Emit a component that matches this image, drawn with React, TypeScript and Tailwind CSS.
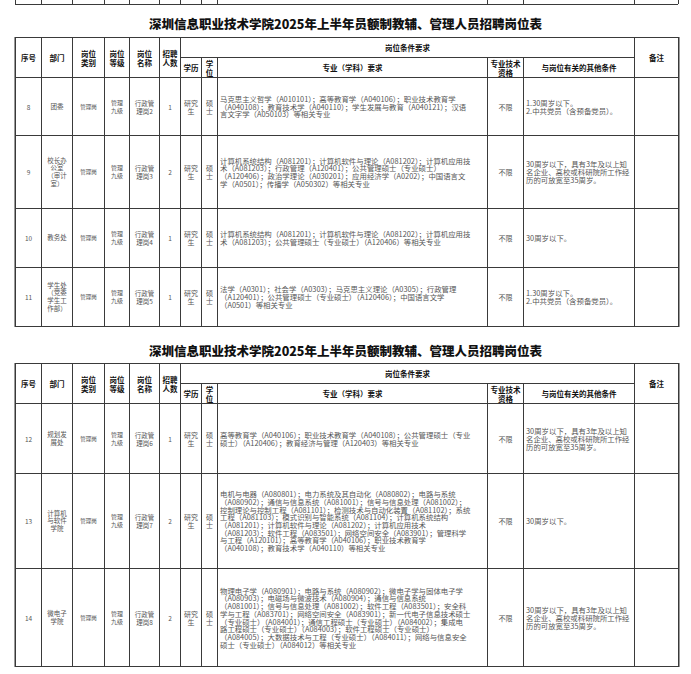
import React from 'react';

const cols = [26, 31, 32, 25, 30, 21, 21, 16, 270, 36, 111, 44];

interface Row {
  no: string;
  dept: string[];
  name: string[];
  count: string;
  major: string[];
  other: string[];
  h: string;
}

const OLD = ['1.30周岁以下。', '2.中共党员（含预备党员）。'];
const EXP = ['30周岁以下，具有3年及以上知', '名企业、高校或科研院所工作经', '历的可放宽至35周岁。'];
const YOUNG = ['30周岁以下。'];

const first: Row[] = [
  {
    no: '8',
    dept: ['团委'],
    name: ['行政管', '理岗2'],
    count: '1',
    major: [
      '马克思主义哲学（A010101）；高等教育学（A040106）；职业技术教育学',
      '（A040108）；教育技术学（A040110）；学生发展与教育（A040121）；汉语',
      '言文字学（A050103）等相关专业',
    ],
    other: OLD,
    h: 'h-[58px]',
  },
  {
    no: '9',
    dept: ['校长办', '公室', '（审计', '室）'],
    name: ['行政管', '理岗3'],
    count: '2',
    major: [
      '计算机系统结构（A081201）；计算机软件与理论（A081202）；计算机应用技',
      '术（A081203）；行政管理（A120401）；公共管理硕士（专业硕士）',
      '（A120406）；政治学理论（A030201）；应用经济学（A0202）；中国语言文',
      '学（A0501）；传播学（A050302）等相关专业',
    ],
    other: EXP,
    h: 'h-[73px]',
  },
  {
    no: '10',
    dept: ['教务处'],
    name: ['行政管', '理岗4'],
    count: '1',
    major: [
      '计算机系统结构（A081201）；计算机软件与理论（A081202）；计算机应用技',
      '术（A081203）；公共管理硕士（专业硕士）（A120406）等相关专业',
    ],
    other: YOUNG,
    h: 'h-[59px]',
  },
  {
    no: '11',
    dept: ['学生处', '（党委', '学生工', '作部）'],
    name: ['行政管', '理岗5'],
    count: '1',
    major: [
      '法学（A0301）；社会学（A0303）；马克思主义理论（A0305）；行政管理',
      '（A120401）；公共管理硕士（专业硕士）（A120406）；中国语言文学',
      '（A0501）等相关专业',
    ],
    other: OLD,
    h: 'h-[59px]',
  },
];

const second: Row[] = [
  {
    no: '12',
    dept: ['规划发', '展处'],
    name: ['行政管', '理岗6'],
    count: '1',
    major: [
      '高等教育学（A040106）；职业技术教育学（A040108）；公共管理硕士（专业',
      '硕士）（A120406）；教育经济与管理（A120403）等相关专业',
    ],
    other: EXP,
    h: 'h-[70px]',
  },
  {
    no: '13',
    dept: ['计算机', '与软件', '学院'],
    name: ['行政管', '理岗7'],
    count: '2',
    major: [
      '电机与电器（A080801）；电力系统及其自动化（A080802）；电路与系统',
      '（A080902）；通信与信息系统（A081001）；信号与信息处理（A081002）；',
      '控制理论与控制工程（A081101）；检测技术与自动化装置（A081102）；系统',
      '工程（A081103）；模式识别与智能系统（A081104）；计算机系统结构',
      '（A081201）；计算机软件与理论（A081202）；计算机应用技术',
      '（A081203）；软件工程（A083501）；网络空间安全（A083901）；管理科学',
      '与工程（A120101）；高等教育学（A040106）；职业技术教育学',
      '（A040108）；教育技术学（A040110）等相关专业',
    ],
    other: YOUNG,
    h: 'h-[95px]',
  },
  {
    no: '14',
    dept: ['微电子', '学院'],
    name: ['行政管', '理岗8'],
    count: '2',
    major: [
      '物理电子学（A080901）；电路与系统（A080902）；微电子学与固体电子学',
      '（A080903）；电磁场与微波技术（A080904）；通信与信息系统',
      '（A081001）；信号与信息处理（A081002）；软件工程（A083501）；安全科',
      '学与工程（A083701）；网络空间安全（A083901）；新一代电子信息技术硕士',
      '（专业硕士）（A084001）；通信工程硕士（专业硕士）（A084002）；集成电',
      '路工程硕士（专业硕士）（A084003）；软件工程硕士（专业硕士）',
      '（A084005）；大数据技术与工程（专业硕士）（A084011）；网络与信息安全',
      '硕士（专业硕士）（A084012）等相关专业',
    ],
    other: EXP,
    h: 'h-[98px]',
  },
];

const th = 'border border-[#3a3a3a] p-0 text-center align-middle font-bold text-[7.5px] leading-[9px] text-[#111]';
const td = 'border border-[#3a3a3a] p-0 text-center align-middle text-[#555]';

function Lines({ items }: { items: string[] }) {
  return (
    <>
      {items.map((s, i) => (
        <div key={i}>{s}</div>
      ))}
    </>
  );
}

function Sheet({ rows }: { rows: Row[] }) {
  return (
    <table className="ml-[15px] w-[663px] table-fixed border-collapse bg-white shadow-[-1px_0_0_#9a9a9a,1px_0_0_#9a9a9a]">
      <colgroup>
        {cols.map((w, i) => (
          <col key={i} style={{ width: w }} />
        ))}
      </colgroup>
      <thead>
        <tr className="h-[20px]">
          <th rowSpan={2} className={th}>序号</th>
          <th rowSpan={2} className={th}>部门</th>
          <th rowSpan={2} className={th}><Lines items={['岗位', '类别']} /></th>
          <th rowSpan={2} className={th}><Lines items={['岗位', '等级']} /></th>
          <th rowSpan={2} className={th}><Lines items={['岗位', '名称']} /></th>
          <th rowSpan={2} className={th}><Lines items={['招聘', '人数']} /></th>
          <th colSpan={5} className={th}>岗位条件要求</th>
          <th rowSpan={2} className={th}>备注</th>
        </tr>
        <tr className="h-[20px]">
          <th className={th}>学历</th>
          <th className={th}><Lines items={['学', '位']} /></th>
          <th className={th}>专业（学科）要求</th>
          <th className={th}><Lines items={['专业技术', '资格']} /></th>
          <th className={th}>与岗位有关的其他条件</th>
        </tr>
      </thead>
      <tbody>
        {rows.map((r) => (
          <tr key={r.no} className={r.h}>
            <td className={`${td} text-[6.5px] leading-[8px]`}>{r.no}</td>
            <td className={`${td} text-[6.5px] leading-[7.6px]`}><Lines items={r.dept} /></td>
            <td className={`${td} text-[5.5px] leading-[8px]`}>管理岗</td>
            <td className={`${td} text-[6px] leading-[8px]`}><Lines items={['管理', '九级']} /></td>
            <td className={`${td} text-[6.5px] leading-[8px]`}><Lines items={r.name} /></td>
            <td className={`${td} text-[6.5px] leading-[8px]`}>{r.count}</td>
            <td className={`${td} text-[7px] leading-[8px]`}><Lines items={['研究', '生']} /></td>
            <td className={`${td} text-[7px] leading-[8px]`}><Lines items={['硕', '士']} /></td>
            <td className={`${td} whitespace-nowrap pl-[2px] text-left text-[7.4px] leading-[7.7px]`}>
              <Lines items={r.major} />
            </td>
            <td className={`${td} text-[7px] leading-[8px]`}>不限</td>
            <td className={`${td} whitespace-nowrap pl-[2px] text-left text-[7.4px] leading-[8px]`}>
              <Lines items={r.other} />
            </td>
            <td className={td}></td>
          </tr>
        ))}
      </tbody>
    </table>
  );
}

function Title({ className }: { className: string }) {
  return (
    <div className={`flex justify-center ${className}`}>
      <h1 className="text-[12.5px] font-black leading-[18px] text-[#111]">
        深圳信息职业技术学院2025年上半年员额制教辅、管理人员招聘岗位表
      </h1>
    </div>
  );
}

export default function App() {
  return (
    <div
      className="h-[674px] w-[691px] overflow-hidden bg-white"
      style={{ fontFamily: '"Noto Sans CJK SC", "Noto Sans", sans-serif' }}
    >
      <div className="ml-[15px] flex h-[5px] w-[663px] border-b border-l border-[#3a3a3a]">
        {cols.map((w, i) => (
          <div key={i} className="h-full shrink-0 border-r border-[#3a3a3a]" style={{ width: w }} />
        ))}
      </div>
      <Title className="pt-[10px] pb-[4px]" />
      <Sheet rows={first} />
      <Title className="pt-[15px] pb-[3px]" />
      <Sheet rows={second} />
    </div>
  );
}
